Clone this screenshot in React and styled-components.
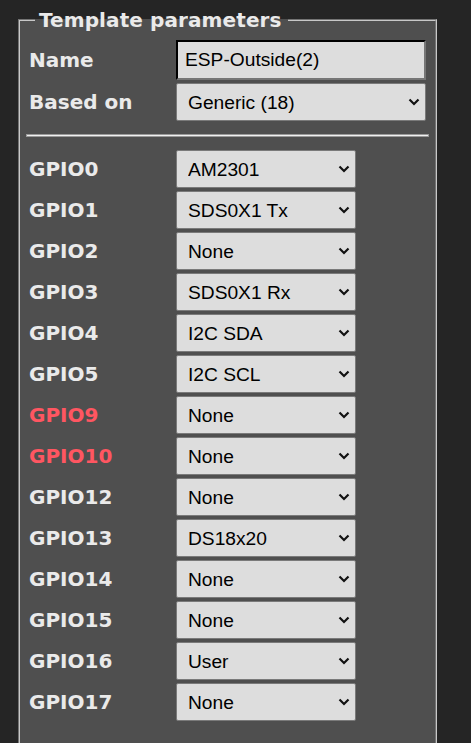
import React from 'react'
import styled, { createGlobalStyle } from 'styled-components'

const GlobalStyle = createGlobalStyle`
body {
  margin: 0;
  background: #252525;
  color: #eaeaea;
  font-family: "DejaVu Sans", Verdana, sans-serif;
}
`

const chevron = "data:image/svg+xml;utf8," + encodeURIComponent(
  '<svg xmlns="http://www.w3.org/2000/svg" width="12" height="8" viewBox="0 0 12 8"><path d="M1.5 1.5 L6 6 L10.5 1.5" fill="none" stroke="#111" stroke-width="2.2"/></svg>'
)

const gpios = [
  { pin: 'GPIO0', value: 'AM2301' },
  { pin: 'GPIO1', value: 'SDS0X1 Tx' },
  { pin: 'GPIO2', value: 'None' },
  { pin: 'GPIO3', value: 'SDS0X1 Rx' },
  { pin: 'GPIO4', value: 'I2C SDA' },
  { pin: 'GPIO5', value: 'I2C SCL' },
  { pin: 'GPIO9', value: 'None', warn: true },
  { pin: 'GPIO10', value: 'None', warn: true },
  { pin: 'GPIO12', value: 'None' },
  { pin: 'GPIO13', value: 'DS18x20' },
  { pin: 'GPIO14', value: 'None' },
  { pin: 'GPIO15', value: 'None' },
  { pin: 'GPIO16', value: 'User' },
  { pin: 'GPIO17', value: 'None' },
]

export default function App() {
  return (
    <Page>
      <GlobalStyle />
      <Fieldset>
        <Legend>Template parameters</Legend>
        <Table>
          <Label>Name</Label>
          <NameInput defaultValue="ESP-Outside(2)" />
          <Label>Based on</Label>
          <Select wide defaultValue="Generic (18)">
            <option>Generic (18)</option>
          </Select>
        </Table>
        <Rule />
        <Table>
          {gpios.map(g => (
            <React.Fragment key={g.pin}>
              <Label warn={g.warn}>{g.pin}</Label>
              <Select defaultValue={g.value}>
                <option>{g.value}</option>
              </Select>
            </React.Fragment>
          ))}
        </Table>
      </Fieldset>
    </Page>
  )
}

const Page = styled.div`
padding: 9px 0 0 18px;
width: 419px;
`
const Fieldset = styled.fieldset`
margin: 0;
padding: 0 6px 30px;
background: #4f4f4f;
border: 2px groove #c8c8c8;
min-width: 0;
`
const Legend = styled.legend`
font-weight: bold;
font-size: 20px;
padding: 0 6px 0 4px;
margin-left: 9px;
line-height: 22px;
letter-spacing: 0.1px;
`
const Table = styled.div`
display: grid;
grid-template-columns: 147px auto;
row-gap: 3px;
align-items: center;
padding: 9px 0 0 3px;
`
const Label = styled.div`
font-weight: bold;
font-size: 20px;
color: ${p => p.warn ? '#ff5661' : '#eaeaea'};
`
const NameInput = styled.input`
box-sizing: border-box;
width: 250px;
height: 40px;
padding: 0 7px;
font-family: "Liberation Sans", Arial, sans-serif;
font-size: 19.2px;
background: #dddddd;
color: #000;
border: 2px inset #767676;
border-top-color: #2a2a2a;
border-left-color: #2a2a2a;
`
const Select = styled.select`
box-sizing: border-box;
appearance: none;
width: ${p => p.wide ? '250px' : '180px'};
height: 38px;
padding: 0 24px 0 11px;
font-family: "Liberation Sans", Arial, sans-serif;
font-size: 19.2px;
color: #000;
background: #dddddd url("${chevron}") no-repeat right 5px center / 12px 8px;
border: 1px solid #7a7a7a;
border-radius: 2px;
`
const Rule = styled.hr`
box-sizing: border-box;
width: 403px;
height: 3px;
margin: 13px 0 4px;
border: 1px solid #9a9a9a;
background: #f0f0f0;
`
